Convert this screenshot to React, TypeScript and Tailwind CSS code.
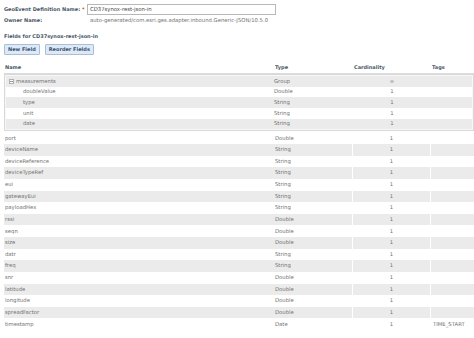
import React from 'react'

const groupRows = [
  { name: 'doubleValue', type: 'Double' },
  { name: 'type', type: 'String' },
  { name: 'unit', type: 'String' },
  { name: 'date', type: 'String' },
]

const fields = [
  ['port', 'Double', ''],
  ['deviceName', 'String', ''],
  ['deviceReference', 'String', ''],
  ['deviceTypeRef', 'String', ''],
  ['eui', 'String', ''],
  ['gatewayEui', 'String', ''],
  ['payloadHex', 'String', ''],
  ['rssi', 'Double', ''],
  ['seqn', 'Double', ''],
  ['size', 'Double', ''],
  ['datr', 'String', ''],
  ['freq', 'String', ''],
  ['snr', 'Double', ''],
  ['latitude', 'Double', ''],
  ['longitude', 'Double', ''],
  ['spreadFactor', 'Double', ''],
  ['timestamp', 'Date', 'TIME_START'],
]

export default function App() {
  return (
    <div className="w-[474px] h-[338px] overflow-hidden bg-white text-[5.3px] leading-none text-[#707070] [font-family:'DejaVu_Sans',Verdana,sans-serif]">
      <div className="pl-[4px] pt-[4px]">
        {/* definition name */}
        <div className="flex h-[11px] items-center">
          <div className="w-[83px] whitespace-nowrap text-[5px] font-bold text-[#4a5868]">
            GeoEvent Definition Name: <span className="text-[#d22]">*</span>
          </div>
          <div className="flex h-[11px] w-[189px] items-center border border-[#b8b8b8] pl-[2px] text-[#444]">
            CD37synox-rest-json-in
          </div>
        </div>
        <div className="flex h-[11px] items-center">
          <div className="w-[86px] whitespace-nowrap text-[5px] font-bold text-[#4a5868]">Owner Name:</div>
          <div>auto-generated/com.esri.ges.adapter.inbound.Generic-JSON/10.5.0</div>
        </div>

        <div className="mt-[5px] flex h-[10px] items-center text-[5px] font-bold text-[#4a5868]">
          Fields for CD37synox-rest-json-in
        </div>

        <div className="mt-[3px] flex gap-[5px]">
          <button className="h-[11px] rounded-[1px] border border-[#a9bfd8] bg-[#dde9f6] px-[3px] text-[5px] font-bold text-[#3a5270]">
            New Field
          </button>
          <button className="h-[11px] rounded-[1px] border border-[#a9bfd8] bg-[#dde9f6] px-[3px] text-[5px] font-bold text-[#3a5270]">
            Reorder Fields
          </button>
        </div>

        {/* header */}
        <div className="mt-[7px] flex h-[12px] items-center border-b border-[#dcdcdc] text-[5px] font-bold text-[#4a5868]">
          <div className="w-[269px] pl-[1px]">Name</div>
          <div className="w-[79px] pl-[2px]">Type</div>
          <div className="w-[78px] pl-[2px]">Cardinality</div>
          <div className="flex-1 pl-[2px]">Tags</div>
        </div>

        {/* group */}
        <div className="border border-[#d8d8d8] bg-[#f7f7f7] p-[1px]">
          <div className="flex h-[10.7px] items-center bg-[#ebebeb]">
            <div className="flex w-[268px] items-center pl-[3px]">
              <span className="mr-[2px] flex h-[5px] w-[5px] items-center justify-center border border-[#b0b0b0] bg-white">
                <span className="h-px w-[3px] bg-[#999]" />
              </span>
              measurements
            </div>
            <div className="w-[79px]">Group</div>
            <div className="w-[78px] text-center">∞</div>
            <div className="flex-1" />
          </div>
          {groupRows.map((r, i) => (
            <div
              key={r.name}
              className={`flex h-[10.7px] items-center ${i % 2 === 1 ? 'bg-[#ebebeb]' : 'bg-white'}`}
            >
              <div className="w-[268px] pl-[17px]">{r.name}</div>
              <div className="w-[79px]">{r.type}</div>
              <div className="w-[78px] text-center">1</div>
              <div className="flex-1" />
            </div>
          ))}
        </div>

        {/* fields */}
        <div className="mt-[1px]">
          {fields.map(([name, type, tag], i) => (
            <div
              key={name}
              className={`flex h-[11.625px] items-center ${i % 2 === 1 ? 'bg-[#ebebeb]' : 'bg-white'}`}
            >
              <div className="flex h-full w-[269px] items-center pl-[1px]">{name}</div>
              <div className="flex h-full w-[79px] items-center pl-[2px]">{type}</div>
              <div className="flex h-full w-[78px] items-center justify-center border-l border-white">1</div>
              <div className="flex h-full flex-1 items-center border-l border-white pl-[2px]">{tag}</div>
            </div>
          ))}
        </div>
      </div>
    </div>
  )
}
